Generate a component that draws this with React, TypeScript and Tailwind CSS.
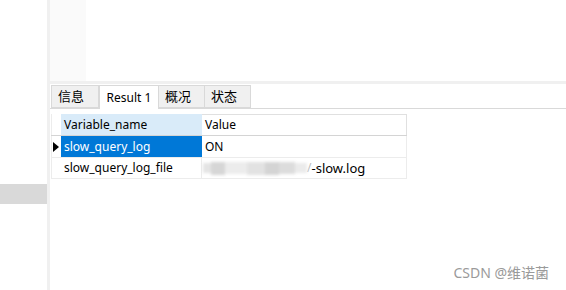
const font = { fontFamily: '"Noto Sans", "Noto Sans CJK SC", sans-serif' };

function Tab({ label, active, w }: { label: string; active?: boolean; w: string }) {
  return (
    <div
      className={
        active
          ? `${w} h-[24px] -mb-px bg-white border border-b-0 border-[#d9d9d9] flex items-center justify-center text-[12px] text-black`
          : `${w} h-[23px] bg-[#f0f0f0] border border-[#d9d9d9] border-l-0 first:border-l flex items-center pl-[6px] text-[13px] text-black`
      }
    >
      {label}
    </div>
  );
}

export default function App() {
  return (
    <div className="flex w-[566px] h-[290px] bg-white overflow-hidden leading-none" style={font}>
      {/* left object panel */}
      <div className="w-[47px] flex flex-col">
        <div className="h-[184px]" />
        <div className="h-[20px] bg-[#d9d9d9]" />
      </div>
      <div className="w-[3px] bg-[#f0f0f0]" />

      <div className="flex-1 flex flex-col relative">
        {/* editor */}
        <div className="h-[81px] flex">
          <div className="w-[36px] bg-[#fafafa]" />
        </div>
        <div className="h-[3px] bg-[#f0f0f0]" />

        {/* tabs */}
        <div className="h-[25px] flex items-end pl-[1px] border-b border-[#d9d9d9]">
          <Tab label="信息" w="w-[48px]" />
          <Tab label="Result 1" w="w-[60px]" active />
          <Tab label="概况" w="w-[46px]" />
          <Tab label="状态" w="w-[46px]" />
        </div>

        {/* grid */}
        <div className="mt-[5px] ml-[1px] w-[356px] flex flex-col text-[12px] text-black">
          <div className="flex h-[22px] border-b border-[#d4d4d4]">
            <div className="w-[10px] border-l border-[#ececec]" />
            <div className="w-[141px] bg-[#d9ebf9] flex items-center pl-[3px]">Variable_name</div>
            <div className="flex-1 flex items-center pl-[3px] border-r border-t border-[#e0e0e0]">Value</div>
          </div>
          <div className="flex h-[22px] border-b border-[#ececec]">
            <div className="w-[10px] flex items-center pl-[1px] border-l border-[#ececec]">
              <svg width="6" height="10" viewBox="0 0 6 10">
                <path d="M0 0 L6 5 L0 10 Z" fill="#000" />
              </svg>
            </div>
            <div className="w-[141px] bg-[#0078d7] text-white flex items-center pl-[3px]">slow_query_log</div>
            <div className="flex-1 flex items-center pl-[3px] border-r border-[#ececec]">ON</div>
          </div>
          <div className="flex h-[21px] border-b border-[#ececec]">
            <div className="w-[10px] border-l border-[#ececec]" />
            <div className="w-[141px] flex items-center pl-[3px] border-r border-[#ececec]">slow_query_log_file</div>
            <div className="flex-1 flex items-center border-r border-[#ececec]">
              <div className="flex items-center h-[15px] w-[104px] blur-[1.5px] ml-[1px]">
                <div className="w-[8px] h-[10px] bg-[#e4e4e4]" />
                <div className="w-[14px] h-[13px] bg-[#d6d6d6]" />
                <div className="w-[22px] h-[12px] bg-[#ececec]" />
                <div className="w-[18px] h-[13px] bg-[#e2e2e2]" />
                <div className="w-[14px] h-[13px] bg-[#d4d4d4]" />
                <div className="w-[16px] h-[12px] bg-[#dcdcdc]" />
                <div className="w-[12px] h-[10px] bg-[#ebebeb]" />
              </div>
              <span className="text-[#bbbbbb]">/</span>
              <span className="text-[13px]">-slow.log</span>
            </div>
          </div>
        </div>

        <div className="absolute right-[17px] bottom-[10px] text-[14px] text-[#9a9a9a]">CSDN @维诺菌</div>
      </div>
    </div>
  );
}
